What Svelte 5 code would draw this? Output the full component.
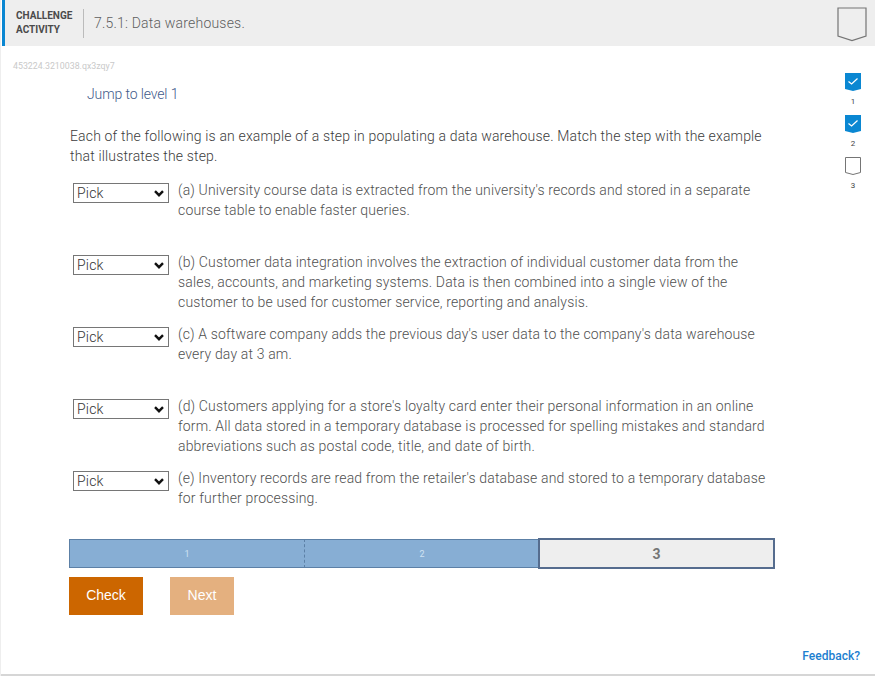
<script>
  const rows = [
    "(a) University course data is extracted from the university's records and stored in a separate course table to enable faster queries.",
    "(b) Customer data integration involves the extraction of individual customer data from the sales, accounts, and marketing systems. Data is then combined into a single view of the customer to be used for customer service, reporting and analysis.",
    "(c) A software company adds the previous day's user data to the company's data warehouse every day at 3 am.",
    "(d) Customers applying for a store's loyalty card enter their personal information in an online form. All data stored in a temporary database is processed for spelling mistakes and standard abbreviations such as postal code, title, and date of birth.",
    "(e) Inventory records are read from the retailer's database and stored to a temporary database for further processing."
  ];
  const levels = [{ n: 1, done: true }, { n: 2, done: true }, { n: 3, done: false }];
</script>

<div class="card">
  <header class="head">
    <div class="label">CHALLENGE<br />ACTIVITY</div>
    <div class="title">7.5.1: Data warehouses.</div>
    <svg class="badge" width="30" height="35" viewBox="0 0 30 35" aria-hidden="true">
      <path d="M1 1H29V29L15 33.5L1 29Z" fill="none" stroke="#757575" stroke-width="1.2" />
    </svg>
  </header>

  <div class="body">
    <main class="main">
      <div class="code">453224.3210038.qx3zqy7</div>
      <div class="jump">Jump to level 1</div>
      <p class="prompt">Each of the following is an example of a step in populating a data warehouse. Match the step with the example that illustrates the step.</p>

      <div class="rows">
        {#each rows as text}
          <div class="row">
            <div class="pickwrap">
              <select class="pick"><option>Pick</option></select>
              <svg class="chev" width="10" height="7" viewBox="0 0 10 7" aria-hidden="true">
                <path d="M1 1.2L5 5.2L9 1.2" fill="none" stroke="#111" stroke-width="2.4" />
              </svg>
            </div>
            <div class="text">{text}</div>
          </div>
        {/each}
      </div>

      <div class="bar">
        <div class="seg done first">1</div>
        <div class="seg done dashed">2</div>
        <div class="seg current">3</div>
      </div>

      <div class="actions">
        <button class="btn check">Check</button>
        <button class="btn next">Next</button>
      </div>
    </main>

    <aside class="levels">
      {#each levels as l}
        <div class="level">
          {#if l.done}
            <svg width="16" height="18" viewBox="0 0 16 18" aria-hidden="true">
              <path d="M0 0H16V16L8 18L0 16Z" fill="#0a87d2" />
              <path d="M3.5 8.5L6.6 11L12.5 5.5" fill="none" stroke="#fff" stroke-width="1.2" />
            </svg>
          {:else}
            <svg width="16" height="18" viewBox="0 0 16 18" aria-hidden="true">
              <path d="M.5 .5H15.5V15.5L8 17.5L.5 15.5Z" fill="#fff" stroke="#757575" />
            </svg>
          {/if}
          <span class="num">{l.n}</span>
        </div>
      {/each}
    </aside>
  </div>

  <footer class="foot">
    <a class="feedback" href="#feedback">Feedback?</a>
  </footer>
</div>

<style>
  :global(body) {
    margin: 0;
    background: #fff;
  }
  .card {
    box-sizing: border-box;
    width: 875px;
    height: 676px;
    padding: 0 0 2px 2px;
    font-family: Roboto, sans-serif;
    color: #5e5e5e;
    display: flex;
    flex-direction: column;
    box-shadow: inset 1px 0 0 #eee, inset 0 -2px 0 #d6d6d6;
  }
  .head {
    flex: none;
    height: 46px;
    box-sizing: border-box;
    display: flex;
    align-items: center;
    background: #eee;
    border-left: 3px solid #0a87d2;
    padding: 0 8px 0 11px;
  }
  .label {
    width: 67px;
    height: 29px;
    font-size: 10px;
    font-weight: 700;
    line-height: 14px;
    color: #4a4a4a;
    border-right: 1px solid #bbb;
    flex: none;
  }
  .title {
    flex: 1;
    margin-left: 10px;
    font-size: 14px;
    font-weight: 300;
    letter-spacing: 0.2px;
    color: #5e5e5e;
  }
  .badge { flex: none; margin-top: 2px; }
  .body {
    flex: 1;
    display: flex;
    min-height: 0;
  }
  .main {
    width: 773px;
    flex: none;
    box-sizing: border-box;
    padding-left: 67px;
  }
  .code {
    margin: 15px 0 0 -56px;
    height: 11px;
    font-size: 8.8px;
    line-height: 11px;
    color: #c9c9c9;
  }
  .jump {
    margin: 12px 0 0 18px;
    font-size: 14px;
    font-weight: 300;
    letter-spacing: -0.12px;
    line-height: 20px;
    color: #3f5a8a;
  }
  .prompt {
    margin: 22px 0 0 1px;
    width: 700px;
    font-size: 14px;
    font-weight: 300;
    line-height: 20px;
    letter-spacing: 0.16px;
    color: #3c3c3c;
  }
  .rows {
    margin: 17px 0 0 4px;
    display: grid;
    grid-auto-rows: 60px;
    row-gap: 12px;
  }
  .row {
    display: flex;
    align-items: flex-start;
  }
  .pickwrap {
    position: relative;
    flex: none;
    width: 96px;
    height: 20px;
  }
  .pick {
    display: block;
    width: 96px;
    height: 20px;
    box-sizing: border-box;
    margin: 0;
    padding: 0 0 0 3px;
    border: 1px solid #767676;
    border-radius: 0;
    appearance: none;
    background: #fff;
    font-family: Roboto, sans-serif;
    font-size: 14px;
    font-weight: 300;
    letter-spacing: 0.2px;
    color: #333;
  }
  .chev {
    position: absolute;
    right: 5px;
    top: 7px;
    pointer-events: none;
  }
  .text {
    width: 592px;
    margin: -3px 0 0 9px;
    font-size: 14px;
    font-weight: 300;
    line-height: 20px;
    letter-spacing: 0.16px;
    color: #505050;
  }
  .bar {
    margin-top: 7px;
    width: 706px;
    height: 31px;
    display: flex;
    align-items: center;
  }
  .seg {
    box-sizing: border-box;
    display: flex;
    align-items: center;
    justify-content: center;
  }
  .done {
    width: 235px;
    height: 29px;
    background: #87aed4;
    color: #cfe2f3;
    font-size: 9px;
    border-top: 1px solid #5c80a6;
    border-bottom: 1px solid #5c80a6;
  }
  .first { border-left: 1px solid #5c80a6; }
  .dashed { border-left: 1px dashed #5c80a6; }
  .current {
    width: 237px;
    height: 31px;
    margin-left: -1px;
    background: #eee;
    border: 2px solid #556c8e;
    font-size: 14px;
    font-weight: 700;
    color: #757575;
  }
  .actions {
    margin-top: 8px;
    display: flex;
    gap: 27px;
  }
  .btn {
    height: 38px;
    border: 0;
    padding: 0 0 2px;
    color: #fff;
    font-family: "Liberation Sans", Arial, sans-serif;
    font-size: 14px;
  }
  .check { width: 74px; background: #cc6600; }
  .next { width: 64px; background: #e4b07f; }
  .levels {
    flex: 1;
    box-sizing: border-box;
    padding: 27px 14px 0 0;
    display: flex;
    flex-direction: column;
    align-items: flex-end;
    gap: 7px;
  }
  .level {
    display: flex;
    flex-direction: column;
    align-items: center;
    height: 35px;
  }
  .level svg { display: block; }
  .num {
    margin-top: 6px;
    font-size: 8px;
    line-height: 10px;
    color: #444;
  }
  .foot {
    flex: none;
    height: 26px;
    display: flex;
    justify-content: flex-end;
    padding-right: 15px;
  }
  .feedback {
    font-size: 12px;
    font-weight: 500;
    line-height: 16px;
    color: #1c80d0;
    text-decoration: none;
  }
</style>
